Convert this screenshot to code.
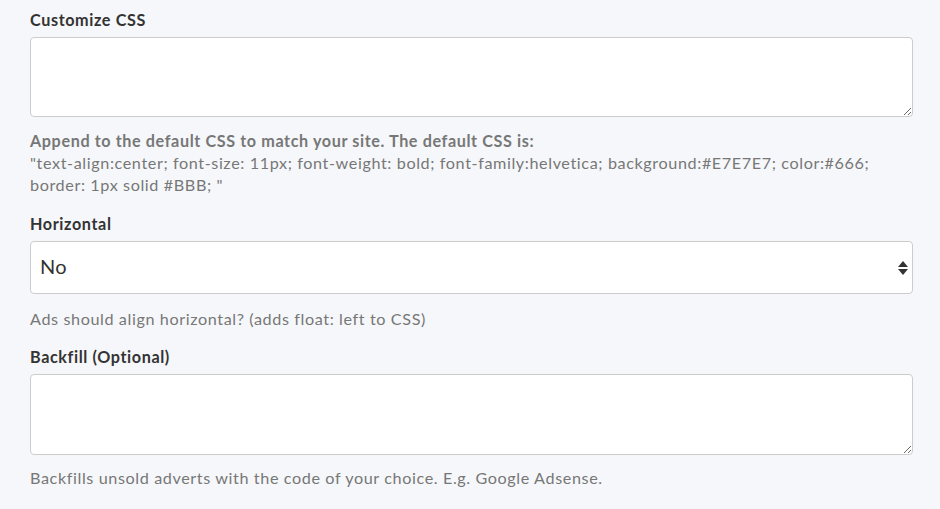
import React from 'react';

const labelCls = "block text-[16.2px] leading-[20px] tracking-[0.6px] font-bold text-[#333]";
const helpCls = "text-[16.2px] leading-[22px] tracking-[0.6px] text-[#777]";
const boxCls = "block w-full bg-white border border-[#ccc] rounded-[4px] outline-none";

export default function App() {
    return (
        <div className="min-h-[509px] w-full bg-[#f6f7fa] px-[30px] pt-[10px] pr-[27px]" style={{ fontFamily: 'Lato, "Open Sans", sans-serif' }}>
            {/* --- Customize CSS --- */}
            <label className={labelCls}>Customize CSS</label>
            <textarea className={`${boxCls} mt-[7px] h-[80px]`} />
            <p className={`${helpCls} mt-[13px]`}>
                <span className="font-bold">Append to the default CSS to match your site. The default CSS is:</span>
                <br />
                "text-align:center; font-size: 11px; font-weight: bold; font-family:helvetica; background:#E7E7E7; color:#666; border: 1px solid #BBB; "
            </p>

            {/* --- Horizontal --- */}
            <label className={`${labelCls} mt-[18px]`}>Horizontal</label>
            <div className="relative mt-[7px]">
                <select className={`${boxCls} h-[53px] appearance-none pl-[9px] pb-[4px] text-[20px] tracking-[0.3px] text-[#333]`} defaultValue="no">
                    <option value="no">No</option>
                    <option value="yes">Yes</option>
                </select>
                <svg className="absolute right-[5px] top-[20px] pointer-events-none" width="10" height="14" viewBox="0 0 10 14">
                    <path d="M5 0 L10 6 L0 6 Z" fill="#333" />
                    <path d="M0 8 L10 8 L5 14 Z" fill="#333" />
                </svg>
            </div>
            <p className={`${helpCls} mt-[14px]`}>Ads should align horizontal? (adds float: left to CSS)</p>

            {/* --- Backfill --- */}
            <label className={`${labelCls} mt-[17px]`}>Backfill (Optional)</label>
            <textarea className={`${boxCls} mt-[7px] h-[81px]`} />
            <p className={`${helpCls} mt-[12px]`}>Backfills unsold adverts with the code of your choice. E.g. Google Adsense.</p>
        </div>
    );
}
